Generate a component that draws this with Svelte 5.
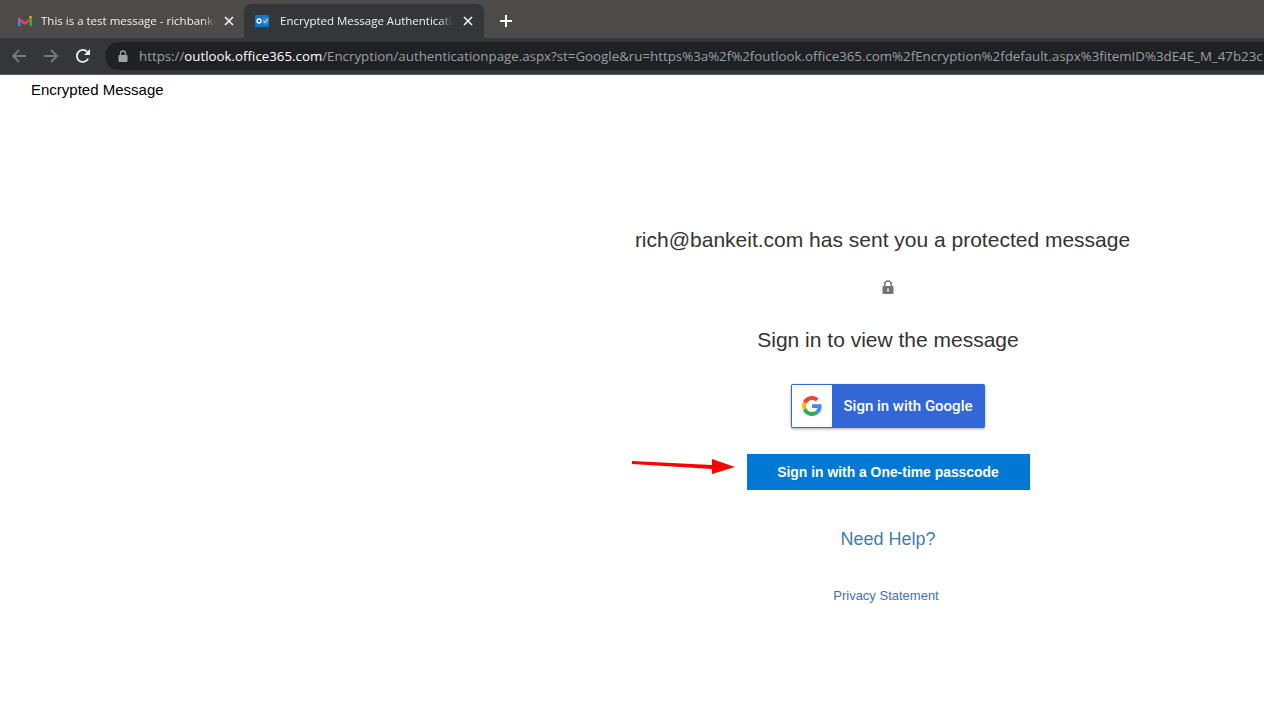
<script>
  const tabs = [
    { title: 'This is a test message - richbanke', icon: 'gmail', active: false },
    { title: 'Encrypted Message Authenticatic', icon: 'outlook', active: true }
  ];
</script>

<div class="chrome">
  <div class="tabstrip">
    {#each tabs as tab}
      <div class="tab" class:active={tab.active}>
        {#if tab.icon === 'gmail'}
          <svg class="favicon" viewBox="0 0 16 16" width="16" height="16">
            <path d="M1 13V4.500L3.600 5.600V13Z" fill="#4285f4" />
            <path d="M15 13V4.500L12.400 5.600V13Z" fill="#34a853" />
            <path d="M3.600 5.600V9L8 12L12.400 9V5.600L8 8.800Z" fill="#ea4335" />
            <path d="M1 4.500C1 3 2.600 2.600 3.600 3.400L3.600 5.600Z" fill="#c5221f" />
            <path d="M15 4.500C15 3 13.400 2.600 12.400 3.400L12.400 5.600Z" fill="#fbbc04" />
          </svg>
        {:else}
          <svg class="favicon" viewBox="0 0 16 16" width="16" height="16">
            <rect x="1" y="2" width="14" height="12" fill="#1173c9" />
            <rect x="8.500" y="4.500" width="6" height="7" fill="#2a8ad8" />
            <circle cx="5" cy="8" r="2" fill="none" stroke="#fff" stroke-width="1.300" />
            <path d="M9.500 8.200L11 9.600L13.800 6" fill="none" stroke="#fff" stroke-width="1" />
          </svg>
        {/if}
        <span class="tab-title">{tab.title}</span>
        <svg class="close" viewBox="0 0 10 10" width="10" height="10">
          <path d="M1 1L9 9M9 1L1 9" stroke="#f1f1f1" stroke-width="1.600" />
        </svg>
      </div>
    {/each}
    <svg class="new-tab" viewBox="0 0 12 12" width="12" height="12">
      <path d="M6 0V12M0 6H12" stroke="#fff" stroke-width="2" />
    </svg>
  </div>

  <div class="toolbar">
    <svg class="nav" viewBox="0 0 16 16" width="16" height="16">
      <path d="M15 8H2M8 2L2 8L8 14" fill="none" stroke="#77797c" stroke-width="1.800" />
    </svg>
    <svg class="nav" viewBox="0 0 16 16" width="16" height="16">
      <path d="M1 8H14M8 2L14 8L8 14" fill="none" stroke="#77797c" stroke-width="1.800" />
    </svg>
    <svg class="nav" viewBox="0 0 16 16" width="16" height="16">
      <path d="M13.200 10.600A6 6 0 1 1 12.200 3.800" fill="none" stroke="#f1f1f1" stroke-width="1.800" />
      <path d="M15 1V7H9Z" fill="#f1f1f1" />
    </svg>
    <div class="omnibox">
      <svg class="url-lock" viewBox="0 0 10 12" width="10" height="12">
        <rect x="0.500" y="5" width="9" height="7" rx="1" fill="#a0a2a5" />
        <path d="M2.500 5V3.500a2.500 2.500 0 0 1 5 0V5" fill="none" stroke="#a0a2a5" stroke-width="1.300" />
      </svg>
      <span class="url">https://<b>outlook.office365.com</b>/Encryption/authenticationpage.aspx?st=Google&amp;ru=https%3a%2f%2foutlook.office365.com%2fEncryption%2fdefault.aspx%3fitemID%3dE4E_M_47b23c</span>
    </div>
  </div>
</div>

<main>
  <div class="page-title">Encrypted Message</div>

  <section class="panel">
    <h1>rich@bankeit.com has sent you a protected message</h1>
    <svg class="lock" viewBox="0 0 12 14" width="12" height="14">
      <path d="M2.800 6.500V4.200a3.200 3.200 0 0 1 6.400 0V6.500" fill="none" stroke="#757575" stroke-width="1.500" />
      <rect x="0.500" y="6" width="11" height="8" rx="1" fill="#757575" />
      <rect x="5.300" y="8.500" width="1.400" height="3" fill="#fff" />
    </svg>
    <h2>Sign in to view the message</h2>

    <button class="google">
      <span class="g-box">
        <svg viewBox="0 0 48 48" width="20" height="20">
          <path d="M24 9.500c3.500 0 6.700 1.300 9.100 3.500l6.800-6.800C35.800 2.400 30.300 0 24 0 14.600 0 6.500 5.400 2.600 13.200l7.900 6.200C12.400 13.700 17.700 9.500 24 9.500z" fill="#ea4335" />
          <path d="M47 24.500c0-1.600-.1-3.100-.4-4.500H24v9h13c-.6 3-2.300 5.500-4.800 7.200l7.700 6C44.400 38 47 31.800 47 24.500z" fill="#4285f4" />
          <path d="M10.500 28.600c-.5-1.400-.8-3-.8-4.600s.3-3.200.8-4.600l-7.900-6.200C.9 16.500 0 20.100 0 24s.9 7.500 2.600 10.800l7.900-6.200z" fill="#fbbc05" />
          <path d="M24 48c6.500 0 11.900-2.100 15.900-5.800l-7.700-6c-2.200 1.400-4.900 2.300-8.200 2.300-6.300 0-11.600-4.200-13.500-9.900l-7.900 6.200C6.500 42.600 14.600 48 24 48z" fill="#34a853" />
        </svg>
      </span>
      <span class="g-label">Sign in with Google</span>
    </button>

    <div class="otp-row">
      <svg class="arrow" viewBox="0 0 106 24" width="106" height="24">
        <path d="M1 7L81 11L81 5L104 13L81 20L81 15L1 10Z" fill="#f00" />
      </svg>
      <button class="otp">Sign in with a One-time passcode</button>
    </div>

    <a class="help" href="#help">Need Help?</a>
    <a class="privacy" href="#privacy">Privacy Statement</a>
  </section>
</main>

<style>
  :global(body) {
    background: #fff;
    overflow: hidden;
  }

  .chrome {
    display: flex;
    flex-direction: column;
    height: 75px;
    font-family: "Open Sans", sans-serif;
  }

  .tabstrip {
    display: flex;
    align-items: flex-end;
    height: 38px;
    padding: 0 0 0 8px;
    background: #4c4b49;
  }

  .tab {
    display: flex;
    align-items: center;
    width: 236px;
    height: 34px;
    box-sizing: border-box;
    padding: 0 9px;
    gap: 8px;
    color: #f1f1f1;
    font-size: 11.5px;
    border-radius: 8px 8px 0 0;
  }

  .tab.active {
    width: 240px;
    padding: 0 10px;
    gap: 10px;
    background: #35363a;
  }

  .favicon {
    flex: none;
  }

  .tab-title {
    flex: 1;
    padding-bottom: 2px;
    overflow: hidden;
    white-space: nowrap;
    -webkit-mask-image: linear-gradient(to left, transparent, #000 14px);
    mask-image: linear-gradient(to left, transparent, #000 14px);
  }

  .close {
    flex: none;
    margin-right: 1px;
  }

  .new-tab {
    margin: 0 0 11px 16px;
  }

  .toolbar {
    display: flex;
    align-items: center;
    height: 37px;
    padding-left: 11px;
    gap: 16px;
    background: #35363a;
    border-bottom: 1px solid #5b5c5f;
    box-sizing: border-box;
  }

  .omnibox {
    display: flex;
    align-items: center;
    flex: 1;
    min-width: 0;
    height: 28px;
    margin-left: -2px;
    padding-left: 13px;
    gap: 11px;
    overflow: hidden;
    background: #202124;
    border-radius: 14px 0 0 14px;
  }

  .url-lock {
    flex: none;
  }

  .url {
    color: #9aa0a6;
    font-size: 13.3px;
    white-space: nowrap;
  }

  .url b {
    color: #fff;
    font-weight: 400;
  }

  main {
    font-family: "Liberation Sans", Arial, sans-serif;
    color: #333;
  }

  .page-title {
    padding: 5px 0 0 31px;
    font-size: 15px;
    line-height: 20px;
    color: #000;
  }

  .panel {
    display: flex;
    flex-direction: column;
    align-items: center;
    width: 520px;
    margin: 0 0 0 628px;
    padding-top: 127px;
  }

  h1,
  h2 {
    margin: 0;
    font-weight: 400;
    font-size: 21px;
    line-height: 26px;
    color: #333;
  }

  h1 {
    margin-left: -11px;
  }

  .lock {
    margin-top: 27px;
    margin-left: -1px;
  }

  h2 {
    margin-top: 33px;
  }

  .google {
    display: flex;
    align-items: stretch;
    width: 194px;
    height: 44px;
    margin-top: 31px;
    padding: 1px;
    border: 0;
    border-radius: 2px;
    background: #3367d6;
    box-shadow: 0 1px 3px rgba(0, 0, 0, 0.35);
  }

  .g-box {
    display: flex;
    align-items: center;
    justify-content: center;
    width: 40px;
    background: #fff;
    border-radius: 1px;
  }

  .g-label {
    flex: 1;
    align-self: center;
    font-family: Roboto, sans-serif;
    font-weight: 500;
    font-size: 15px;
    color: #fff;
    text-align: center;
  }

  .otp-row {
    position: relative;
    margin-top: 26px;
  }

  .arrow {
    position: absolute;
    top: 0;
    left: -116px;
  }

  .otp {
    display: block;
    width: 283px;
    height: 36px;
    padding: 0;
    border: 0;
    background: #0078d4;
    color: #fff;
    font-family: "Liberation Sans", Arial, sans-serif;
    font-weight: 700;
    font-size: 13.9px;
  }

  .help {
    margin-top: 37px;
    font-size: 18px;
    line-height: 24px;
    color: #3f7cac;
    text-decoration: none;
  }

  .privacy {
    margin-top: 37px;
    margin-left: -4px;
    font-size: 13px;
    line-height: 16px;
    color: #4472b0;
    text-decoration: none;
  }
</style>
